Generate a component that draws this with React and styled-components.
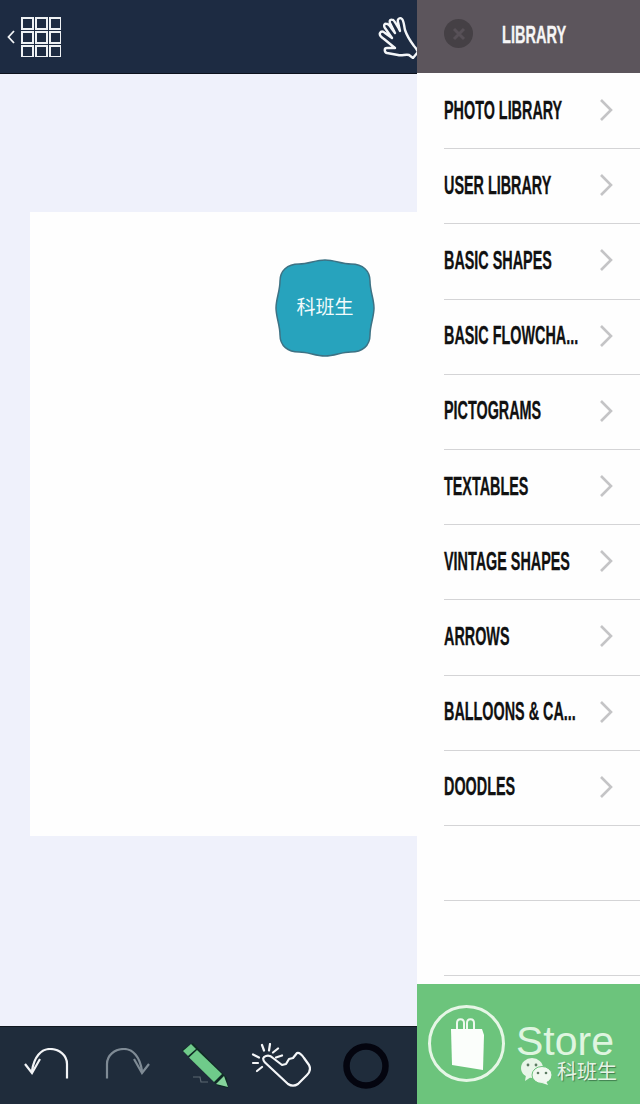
import React from 'react';
import styled, { createGlobalStyle } from 'styled-components';

const GlobalStyle = createGlobalStyle`
  html, body {
    margin: 0;
    padding: 0;
    background: #eff1fb;
  }
`;

const Screen = styled.div`
  display: flex;
  width: 640px;
  height: 1104px;
  overflow: hidden;
  font-family: 'Liberation Sans', Arial, sans-serif;
`;

const Editor = styled.div`
  width: 417px;
  display: flex;
  flex-direction: column;
`;

const TopBar = styled.header`
  height: 73px;
  box-sizing: content-box;
  background: #1d2b42;
  border-bottom: 1px solid #0c121c;
  display: flex;
  align-items: center;
  justify-content: space-between;
  padding-left: 7px;
  overflow: hidden;
`;

const BackGroup = styled.div`
  display: flex;
  align-items: center;
  gap: 6px;
`;

const Stage = styled.main`
  flex: 1;
  background: #eff1fb;
  padding: 138px 0 190px 30px;
`;

const Canvas = styled.div`
  position: relative;
  height: 100%;
  background: #fefefe;
`;

const Badge = styled.div`
  position: absolute;
  left: 245px;
  top: 47px;
  width: 100px;
  height: 98px;
  display: flex;
  align-items: center;
  justify-content: center;
`;

const BadgeShape = styled.svg`
  position: absolute;
  inset: 0;
`;

const BadgeLabel = styled.span`
  position: relative;
  color: #f2fbfc;
  font-size: 19px;
  font-family: 'Noto Sans CJK SC', sans-serif;
  margin-top: -6px;
`;

const BottomBar = styled.footer`
  height: 77px;
  background: #1f2c3b;
  border-top: 1px solid #10171f;
  display: flex;
  align-items: center;
  padding-left: 23px;
`;

const ToolSlot = styled.div`
  width: ${(p) => p.$width}px;
  display: flex;
  align-items: center;
  flex-shrink: 0;
`;

const Panel = styled.aside`
  width: 223px;
  display: flex;
  flex-direction: column;
  background: #fefefe;
`;

const PanelHeader = styled.div`
  height: 73px;
  background: #5c555c;
  display: flex;
  align-items: center;
  padding-left: 27px;
  gap: 29px;
`;

const CloseDot = styled.div`
  width: 29px;
  height: 29px;
  border-radius: 50%;
  background: #454045;
  display: flex;
  align-items: center;
  justify-content: center;
  margin-top: -6px;
`;

const Squeezed = styled.span`
  display: inline-block;
  font-family: 'Liberation Sans Narrow', 'Liberation Sans', sans-serif;
  font-weight: 700;
  white-space: nowrap;
  transform-origin: left center;
  transform: scaleX(${(p) => p.$scale});
  -webkit-text-stroke: 0.3px currentColor;
`;

const PanelTitle = styled(Squeezed)`
  color: #f6f5f6;
  font-size: 24px;
  margin-top: -4px;
`;

const LibraryList = styled.div`
  flex: 1;
  padding: 1px 0 0 27px;
`;

const Row = styled.div`
  height: 74.2px;
  border-bottom: 1px solid #d4d4d6;
  display: flex;
  align-items: center;
  color: #111;
`;

const RowLabel = styled(Squeezed)`
  font-size: 25px;
  margin-top: -2px;
  width: 156px;
  flex-shrink: 0;
`;

const Chevron = styled.svg`
  margin-left: -1px;
  margin-top: -2px;
`;

const StoreButton = styled.div`
  height: 120px;
  background: #6cc47c;
  display: flex;
  align-items: center;
  padding-left: 11px;
  gap: 11px;
  position: relative;
`;

const StoreRing = styled.div`
  width: 71px;
  height: 71px;
  border: 3px solid #e6f6e6;
  border-radius: 50%;
  display: flex;
  align-items: center;
  justify-content: center;
  margin-top: -1px;
`;

const StoreText = styled.span`
  color: #dff5e0;
  font-size: 41px;
  line-height: 38px;
  margin-top: -6px;
`;

const Watermark = styled.div`
  position: absolute;
  left: 103px;
  top: 73px;
  display: flex;
  align-items: center;
  gap: 5px;
  color: #e6f3e6;
  font-size: 20px;
  line-height: 20px;
  font-family: 'Noto Sans CJK SC', sans-serif;
  text-shadow: 1px 1px 1px #3f7d4e;
`;

const rows = [
  'PHOTO LIBRARY',
  'USER LIBRARY',
  'BASIC SHAPES',
  'BASIC FLOWCHA...',
  'PICTOGRAMS',
  'TEXTABLES',
  'VINTAGE SHAPES',
  'ARROWS',
  'BALLOONS & CA...',
  'DOODLES',
  '',
  '',
];

const GridIcon = () => (
  <svg width="40" height="40" viewBox="0 0 40 40" fill="none" stroke="#eef1f4" strokeWidth="2">
    {[0, 1, 2].map((r) =>
      [0, 1, 2].map((c) => (
        <rect key={`${r}${c}`} x={1 + c * 14} y={1 + r * 14} width="11" height="11" />
      ))
    )}
  </svg>
);

const BackIcon = () => (
  <svg width="8" height="14" viewBox="0 0 8 14" fill="none" stroke="#f2f4f6" strokeWidth="1.8">
    <path d="M7 1 L1.5 7 L7 13" />
  </svg>
);

const HandIcon = () => (
  <svg width="42" height="44" viewBox="0 0 42 44" fill="none" stroke="#f4f6f8" strokeWidth="2.4" strokeLinejoin="round" style={{ marginRight: -3 }}>
    <path d="M20 40 L9 38 C6 37 6 33 9 33 L17 33 L6 24 C3 22 1 20 2 18 C3 16 5 16 7 18 L14 23 L7 13 C5 10 7 8 9 9 C10 9 12 11 14 14 L17 18 L12 8 C11 5 13 4 15 5 C16 5 18 9 20 12 L22 16 L20 7 C19 4 22 2 24 4 C26 6 26 11 27 15 C29 21 33 27 36 31 C38 33 39 35 40 37 L35 43 L31 40 C28 39 24 41 20 40 Z" />
  </svg>
);

const UndoIcon = ({ color, flip }) => (
  <svg width="46" height="36" viewBox="0 0 46 36" fill="none" stroke={color} strokeWidth="2.2" style={flip ? { transform: 'scaleX(-1)' } : undefined}>
    <path d="M44 30.5 V16 C44 7 36 1 27 1 C18 1 11 9 9 23" />
    <path d="M2 16 L9 25 L17 11" />
  </svg>
);

const PencilIcon = () => (
  <svg width="48" height="46" viewBox="0 0 48 46">
    <path d="M1 7 L12 0 L46 35 L47 45 L37 43 Z" fill="#0f2a25" />
    <path d="M2 8 L10 1 L15 6 L7 13 Z" fill="#6fcb8a" />
    <path d="M8 14.5 L16 7 L41 31 L33 39 Z" fill="#6fcb8a" />
    <path d="M35 41 L43 33 L47 44 Z" fill="#86d49c" />
    <path d="M12 34 L19 34 L20 39 L27 39" fill="none" stroke="#5d6873" strokeWidth="1.2" />
  </svg>
);

const TapIcon = () => (
  <svg width="60" height="46" viewBox="0 0 60 46" fill="none" stroke="#f4f6f8" strokeWidth="2.2" strokeLinecap="round" strokeLinejoin="round">
    <path d="M14 19.5 C11 16 12 14 15 13 C18 12 20 13 22 15 L31 22 L35 21 L38 16 L42 15 L46 10 C49 9 51 12 53 15 L58 22 C60 26 59 29 56 32 L47 41 C44 43 40 43 37 41 Z" />
    <path d="M11 2 L13 7.5 M19 1 L18 7.5 M27 5.5 L22 9.5 M31 12.5 L25 14.5 M2 11.5 L8 14.5 M2 20 L7 20 M6 28 L11 24" />
  </svg>
);

const ColorRing = () => (
  <svg width="46" height="46" viewBox="0 0 46 46" fill="none">
    <circle cx="23" cy="23" r="19.5" stroke="#04050f" strokeWidth="6.5" />
  </svg>
);

const BagIcon = () => (
  <svg width="34" height="54" viewBox="0 0 34 54">
    <path d="M7 13 V6 C7 1 14 1 14 6 V13 M17 13 V6 C17 1 24 1 24 6 V13" fill="none" stroke="#eef8ee" strokeWidth="2" />
    <path d="M1 12 L32 12 L34 18 L33 53 L2 48 Z" fill="#fbfefb" />
  </svg>
);

const WeChatIcon = () => (
  <svg width="32" height="28" viewBox="0 0 32 28">
    <ellipse cx="12" cy="11" rx="11" ry="10" fill="#e8f5e8" />
    <path d="M6 18 L5 24 L11 20 Z" fill="#e8f5e8" />
    <circle cx="8" cy="8" r="1.4" fill="#5d7a62" />
    <circle cx="16" cy="8" r="1.4" fill="#5d7a62" />
    <ellipse cx="22" cy="18" rx="10" ry="8.5" fill="#f1f8f0" stroke="#6cc47c" strokeWidth="1" />
    <path d="M26 24 L28 28 L22 26 Z" fill="#f1f8f0" />
    <circle cx="18" cy="16" r="1.3" fill="#5d7a62" />
    <circle cx="26" cy="16" r="1.3" fill="#5d7a62" />
  </svg>
);

const App = () => {
  return (
    <Screen>
      <GlobalStyle />
      <Editor>
        <TopBar>
          <BackGroup>
            <BackIcon />
            <GridIcon />
          </BackGroup>
          <HandIcon />
        </TopBar>
        <Stage>
          <Canvas>
            <Badge>
              <BadgeShape width="100" height="98" viewBox="0 0 100 98">
                <path
                  d="M50 1 C60 1 66 5 76 5 C88 5 95 12 95 22 C95 32 99 40 99 49 C99 58 95 66 95 76 C95 87 87 93 76 93 C66 93 60 97 50 97 C40 97 34 93 24 93 C13 93 5 87 5 76 C5 66 1 58 1 49 C1 40 5 32 5 22 C5 12 12 5 24 5 C34 5 40 1 50 1 Z"
                  fill="#27a3bd"
                  stroke="#3d7284"
                  strokeWidth="1.5"
                />
              </BadgeShape>
              <BadgeLabel>科班生</BadgeLabel>
            </Badge>
          </Canvas>
        </Stage>
        <BottomBar>
          <ToolSlot $width={82}><UndoIcon color="#f2f4f6" /></ToolSlot>
          <ToolSlot $width={76}><UndoIcon color="#7f8b95" flip /></ToolSlot>
          <ToolSlot $width={70}><PencilIcon /></ToolSlot>
          <ToolSlot $width={92}><TapIcon /></ToolSlot>
          <ToolSlot $width={46}><ColorRing /></ToolSlot>
        </BottomBar>
      </Editor>
      <Panel>
        <PanelHeader>
          <CloseDot>
            <svg width="14" height="14" viewBox="0 0 14 14" stroke="#575057" strokeWidth="3">
              <path d="M2 2 L12 12 M12 2 L2 12" />
            </svg>
          </CloseDot>
          <PanelTitle $scale={0.606}>LIBRARY</PanelTitle>
        </PanelHeader>
        <LibraryList>
          {rows.map((label, i) => (
            <Row key={i}>
              {label && <RowLabel $scale={0.575}>{label}</RowLabel>}
              {label && (
                <Chevron width="14" height="22" viewBox="0 0 14 22" fill="none" stroke="#c4c4c6" strokeWidth="2.6">
                  <path d="M2 1 L12 11 L2 21" />
                </Chevron>
              )}
            </Row>
          ))}
        </LibraryList>
        <StoreButton>
          <StoreRing>
            <BagIcon />
          </StoreRing>
          <StoreText>Store</StoreText>
          <Watermark>
            <WeChatIcon />
            科班生
          </Watermark>
        </StoreButton>
      </Panel>
    </Screen>
  );
};

export default App;
